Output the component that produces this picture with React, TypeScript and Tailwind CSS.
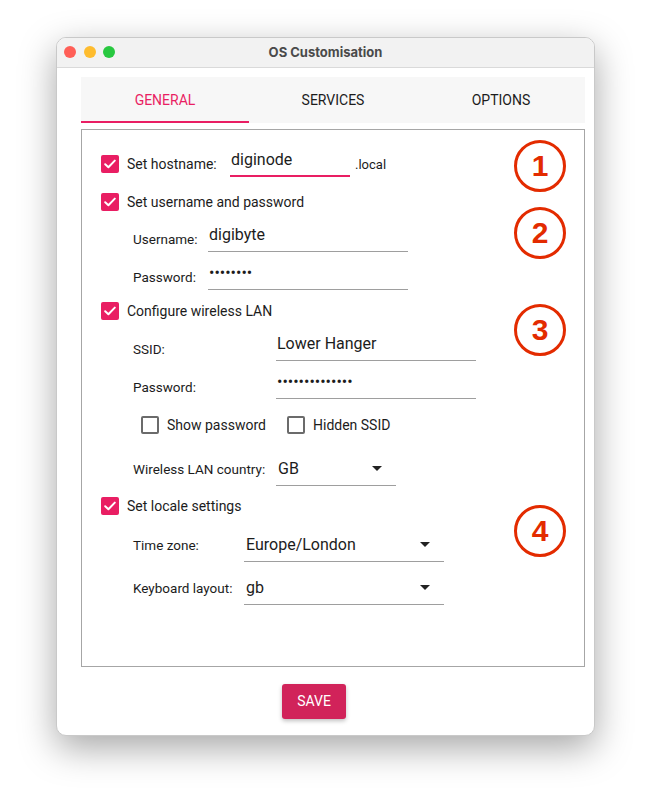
import React from "react";

const font = { fontFamily: "Roboto, 'Noto Sans', sans-serif" };

function Check({ on }: { on: boolean }) {
  return on ? (
    <div className="w-[18px] h-[18px] rounded-[2px] bg-[#e91e63] flex items-center justify-center shrink-0">
      <svg width="12" height="10" viewBox="0 0 12 10">
        <path d="M1.2 5.2 L4.4 8.2 L10.8 1.6" stroke="white" strokeWidth="2" fill="none" strokeLinecap="round" strokeLinejoin="round" />
      </svg>
    </div>
  ) : (
    <div className="w-[18px] h-[18px] rounded-[2px] border-2 border-[#6b6b6b] shrink-0" />
  );
}

function Arrow() {
  return (
    <svg width="10" height="5" viewBox="0 0 10 5">
      <path d="M0 0 L10 0 L5 5 Z" fill="#222" />
    </svg>
  );
}

function Field({ value, w, pink }: { value: string; w: string; pink?: boolean }) {
  return (
    <div className={`${w} h-[26px] flex flex-col ${pink ? "border-b-2 border-[#e91e63]" : "border-b border-[#9e9e9e]"}`}>
      <span className="text-[16px] leading-[18px] text-[#1c1c1c] pl-[1px]">{value}</span>
    </div>
  );
}

function Combo({ value, w }: { value: string; w: string }) {
  return (
    <div className={`${w} h-[34px] flex items-center justify-between pl-[2px] pr-[14px] border-b border-[#9e9e9e]`}>
      <span className="text-[16px] text-[#1c1c1c]">{value}</span>
      <Arrow />
    </div>
  );
}

function Circle({ n, top }: { n: string; top: string }) {
  return (
    <div className={`absolute left-[432px] ${top} w-[52px] h-[52px] rounded-full border-[3.5px] border-[#e32b00] flex items-center justify-center`}>
      <span className="text-[#e32b00] text-[30px] font-bold leading-none" style={{ fontFamily: "'Liberation Sans', Arial, sans-serif" }}>{n}</span>
    </div>
  );
}

export default function App() {
  return (
    <div className="w-[651px] h-[810px] bg-white pt-[37px] pl-[56px]" style={font}>
      <div className="w-[539px] h-[699px] rounded-[10px] overflow-hidden bg-white border border-[#c9c9c9] shadow-[0_12px_36px_rgba(0,0,0,0.35)] flex flex-col">
        <div className="h-[30px] shrink-0 bg-[#f2f2f2] border-b border-[#dadada] relative flex items-center justify-center">
          <div className="absolute left-[7px] top-[8px] flex gap-[7.5px]">
            <div className="w-[12px] h-[12px] rounded-full bg-[#ff5f57]" />
            <div className="w-[12px] h-[12px] rounded-full bg-[#febc2e]" />
            <div className="w-[12px] h-[12px] rounded-full bg-[#28c840]" />
          </div>
          <span className="text-[13px] font-bold text-[#4a4a4a]" style={{ fontFamily: "Inter, 'Noto Sans', sans-serif" }}>OS Customisation</span>
        </div>
        <div className="flex flex-col pl-[24px] pr-[9px]">
          <div className="mt-[9px] h-[46px] bg-[#f7f7f7] flex">
            <div className="flex-1 flex items-center justify-center text-[14px] text-[#e91e63] border-b-2 border-[#e91e63] pt-[2px]">GENERAL</div>
            <div className="flex-1 flex items-center justify-center text-[14px] text-[#1c1c1c]">SERVICES</div>
            <div className="flex-1 flex items-center justify-center text-[14px] text-[#1c1c1c]">OPTIONS</div>
          </div>
          <div className="mt-[6px] h-[538px] border border-[#a6a6a6] relative flex flex-col pt-[15px] text-[#1c1c1c]">
            <div className="h-[38px] flex items-center pl-[19px]">
              <Check on />
              <span className="ml-[8px] w-[103px] text-[14px]">Set hostname:</span>
              <Field value="diginode" w="w-[120px]" pink />
              <span className="ml-[5px] mt-[2px] text-[13px]">.local</span>
            </div>
            <div className="h-[38px] flex items-center pl-[19px]">
              <Check on />
              <span className="ml-[8px] text-[14px]">Set username and password</span>
            </div>
            <div className="h-[36px] flex items-center pl-[51px]">
              <span className="w-[75px] text-[13.5px]">Username:</span>
              <Field value="digibyte" w="w-[200px]" />
            </div>
            <div className="h-[40px] flex items-center pl-[51px]">
              <span className="w-[75px] text-[13.5px]">Password:</span>
              <Field value="••••••••" w="w-[200px]" />
            </div>
            <div className="h-[28px] flex items-center pl-[19px]">
              <Check on />
              <span className="ml-[8px] text-[14px]">Configure wireless LAN</span>
            </div>
            <div className="h-[46px] flex items-center pl-[51px]">
              <span className="w-[143px] text-[13.5px] mt-[2px]">SSID:</span>
              <Field value="Lower Hanger" w="w-[200px]" />
            </div>
            <div className="h-[30px] flex items-center pl-[51px]">
              <span className="w-[143px] text-[13.5px] mt-[2px]">Password:</span>
              <Field value="••••••••••••••" w="w-[200px]" />
            </div>
            <div className="h-[48px] flex items-center pl-[59px]">
              <Check on={false} />
              <span className="ml-[8px] w-[120px] text-[14px]">Show password</span>
              <Check on={false} />
              <span className="ml-[8px] text-[14px]">Hidden SSID</span>
            </div>
            <div className="h-[40px] flex items-center pl-[51px]">
              <span className="w-[143px] text-[13.5px]">Wireless LAN country:</span>
              <Combo value="GB" w="w-[120px]" />
            </div>
            <div className="h-[34px] flex items-center pl-[19px]">
              <Check on />
              <span className="ml-[8px] text-[14px]">Set locale settings</span>
            </div>
            <div className="h-[44px] flex items-center pl-[51px]">
              <span className="w-[111px] text-[13.5px]">Time zone:</span>
              <Combo value="Europe/London" w="w-[200px]" />
            </div>
            <div className="h-[42px] flex items-center pl-[51px]">
              <span className="w-[111px] text-[13.5px]">Keyboard layout:</span>
              <Combo value="gb" w="w-[200px]" />
            </div>
            <Circle n="1" top="top-[10px]" />
            <Circle n="2" top="top-[77px]" />
            <Circle n="3" top="top-[174px]" />
            <Circle n="4" top="top-[375px]" />
          </div>
          <button className="mt-[17px] ml-[201px] self-start w-[64px] h-[35px] rounded-[3px] bg-[#d1235a] text-white text-[14px] shadow-[0_2px_4px_rgba(0,0,0,0.25)]">SAVE</button>
        </div>
      </div>
    </div>
  );
}
